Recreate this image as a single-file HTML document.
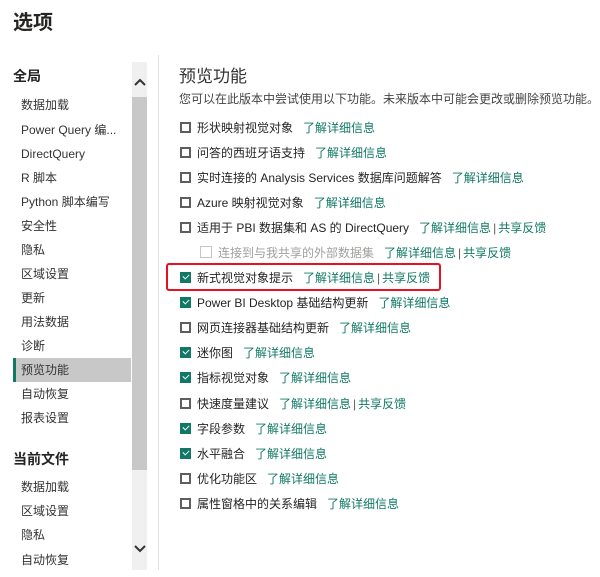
<!DOCTYPE html><html><head><meta charset="utf-8"><style>
body{margin:0;width:600px;height:577px;background:#fff;font-family:"Liberation Sans","Noto Sans CJK SC",sans-serif;color:#252423;position:relative;overflow:hidden}
.a{position:absolute;white-space:nowrap}
.t{left:13px;top:6px;font-size:20px;font-weight:bold}
.h{left:13px;font-size:14px;font-weight:bold}
.n{left:21px;font-size:12px;color:#333;line-height:24px}
.sel{position:absolute;left:13px;top:358px;width:118px;height:24px;background:#c8c8c8;border-left:3px solid #117865;box-sizing:border-box}
.r{left:180px;font-size:12px;line-height:18px;color:#252423}
.cb{display:inline-block;width:7px;height:7px;border:2px solid #605e5c;vertical-align:-1px;margin-right:6px}
.ck{display:inline-block;width:11px;height:11px;background:#117865;vertical-align:-1px;margin-right:6px;position:relative}
.ck:after{content:"";position:absolute;left:3px;top:2px;width:5px;height:3px;border-left:1.5px solid #fff;border-bottom:1.5px solid #fff;transform:rotate(-45deg)}
.l{color:#117865;margin-left:10px}
.s{color:#117865}
.p{color:#605e5c;margin:0 2px}
</style></head><body>
<div class="a t">选项</div>
<div class="a h" style="top:66px">全局</div>
<div class="sel"></div>
<div class="a n" style="top:93px">数据加载</div>
<div class="a n" style="top:118px">Power Query 编...</div>
<div class="a n" style="top:142px">DirectQuery</div>
<div class="a n" style="top:166px">R 脚本</div>
<div class="a n" style="top:190px">Python 脚本编写</div>
<div class="a n" style="top:214px">安全性</div>
<div class="a n" style="top:238px">隐私</div>
<div class="a n" style="top:262px">区域设置</div>
<div class="a n" style="top:286px">更新</div>
<div class="a n" style="top:310px">用法数据</div>
<div class="a n" style="top:334px">诊断</div>
<div class="a n" style="top:358px">预览功能</div>
<div class="a n" style="top:382px">自动恢复</div>
<div class="a n" style="top:406px">报表设置</div>
<div class="a h" style="top:449px">当前文件</div>
<div class="a n" style="top:475px">数据加载</div>
<div class="a n" style="top:499px">区域设置</div>
<div class="a n" style="top:523px">隐私</div>
<div class="a n" style="top:548px">自动恢复</div>
<div class="a" style="left:132px;top:62px;width:15px;height:508px;background:#f0f0f0"></div>
<div class="a" style="left:132px;top:97px;width:15px;height:373px;background:#c8c8c8"></div>
<svg class="a" style="left:134px;top:78px" width="12" height="10"><path d="M1 7 L6 2 L11 7" stroke="#333" stroke-width="2" fill="none"/></svg>
<svg class="a" style="left:134px;top:543px" width="12" height="10"><path d="M1 3 L6 8 L11 3" stroke="#333" stroke-width="2" fill="none"/></svg>
<div class="a" style="left:158px;top:55px;width:1px;height:515px;background:#e1dfdd"></div>
<div class="a" style="left:179px;top:62px;font-size:17px;color:#333">预览功能</div>
<div class="a" style="left:179px;top:90px;font-size:12px;color:#444">您可以在此版本中尝试使用以下功能。未来版本中可能会更改或删除预览功能。</div>
<div class="a r" style="top:119px"><span class="cb"></span>形状映射视觉对象<span class="l">了解详细信息</span></div>
<div class="a r" style="top:144px"><span class="cb"></span>问答的西班牙语支持<span class="l">了解详细信息</span></div>
<div class="a r" style="top:169px"><span class="cb"></span>实时连接的 Analysis Services 数据库问题解答<span class="l">了解详细信息</span></div>
<div class="a r" style="top:194px"><span class="cb"></span>Azure 映射视觉对象<span class="l">了解详细信息</span></div>
<div class="a r" style="top:219px"><span class="cb"></span>适用于 PBI 数据集和 AS 的 DirectQuery<span class="l">了解详细信息</span><span class="p">|</span><span class="s">共享反馈</span></div>
<div class="a r" style="top:244px;left:200px;color:#a19f9d"><span class="cb" style="border:1px solid #c8c6c4;width:10px;height:10px"></span>连接到与我共享的外部数据集<span class="l">了解详细信息</span><span class="p">|</span><span class="s">共享反馈</span></div>
<div class="a r" style="top:269px"><span class="ck"></span>新式视觉对象提示<span class="l">了解详细信息</span><span class="p">|</span><span class="s">共享反馈</span></div>
<div class="a" style="left:166px;top:263px;width:275px;height:28px;border:2px solid #e81123;border-radius:3px;box-sizing:border-box"></div>
<div class="a r" style="top:294px"><span class="ck"></span>Power BI Desktop 基础结构更新<span class="l">了解详细信息</span></div>
<div class="a r" style="top:319px"><span class="cb"></span>网页连接器基础结构更新<span class="l">了解详细信息</span></div>
<div class="a r" style="top:344px"><span class="ck"></span>迷你图<span class="l">了解详细信息</span></div>
<div class="a r" style="top:369px"><span class="ck"></span>指标视觉对象<span class="l">了解详细信息</span></div>
<div class="a r" style="top:395px"><span class="cb"></span>快速度量建议<span class="l">了解详细信息</span><span class="p">|</span><span class="s">共享反馈</span></div>
<div class="a r" style="top:420px"><span class="ck"></span>字段参数<span class="l">了解详细信息</span></div>
<div class="a r" style="top:445px"><span class="ck"></span>水平融合<span class="l">了解详细信息</span></div>
<div class="a r" style="top:470px"><span class="cb"></span>优化功能区<span class="l">了解详细信息</span></div>
<div class="a r" style="top:495px"><span class="cb"></span>属性窗格中的关系编辑<span class="l">了解详细信息</span></div>
</body></html>
